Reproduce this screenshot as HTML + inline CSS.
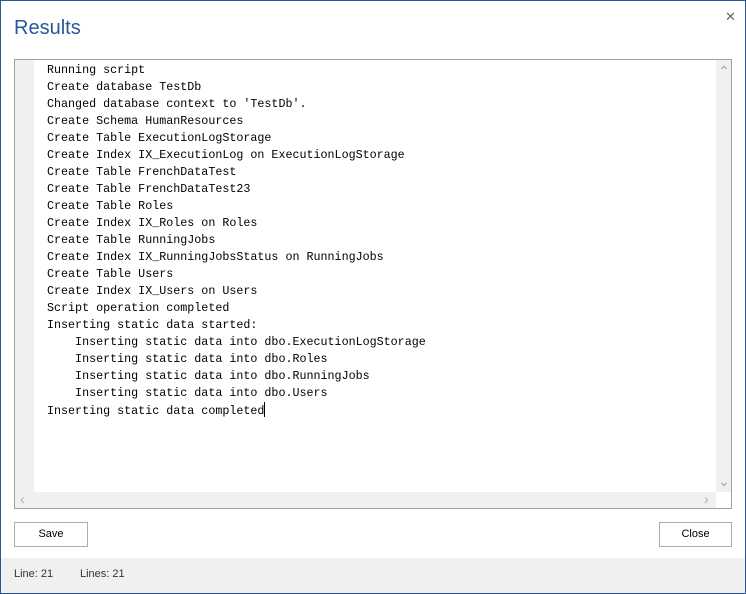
<!DOCTYPE html>
<html><head><style>
body{margin:0;width:746px;height:594px;overflow:hidden;background:#fff;font-family:"Liberation Sans",sans-serif;}
.win{position:absolute;left:0;top:0;width:744px;height:592px;border:1px solid #2b579a;background:#fff;}
.title{position:absolute;left:13px;top:16px;font-size:20px;color:#2b579a;}
.x{position:absolute;left:724px;top:8px;font-size:13px;color:#666;}
.box{position:absolute;left:13px;top:58px;width:716px;height:448px;border:1px solid #a0a0a0;background:#fff;}
.gut{position:absolute;left:0;top:0;width:19px;height:432px;background:#f0f0f0;}
.vs{position:absolute;left:701px;top:0;width:15px;height:432px;background:#f0f0f0;}
.hs{position:absolute;left:0;top:432px;width:701px;height:16px;background:#f0f0f0;}
.ar{position:absolute;color:#a8a8a8;font-size:14px;line-height:14px;}
pre{position:absolute;left:32px;top:2px;margin:0;font-family:"Liberation Mono",monospace;font-size:11.7px;line-height:17px;color:#000;}
.cur{display:inline-block;width:1px;height:15px;background:#000;vertical-align:-3px;}
.btn{position:absolute;top:521px;height:23px;border:1px solid #adadad;background:#fff;font-size:11px;text-align:center;line-height:23px;color:#000;}
.status{position:absolute;left:0;top:557px;width:744px;height:35px;background:#f0f0f0;font-size:11px;color:#333;}
</style></head><body>
<div class="win">
<div class="title">Results</div>
<div class="x">✕</div>
<div class="box">
<div class="gut"></div>
<div class="vs"><span class="ar" style="left:2px;top:4px">&#8963;</span><span class="ar" style="left:2px;top:414px">&#8964;</span></div>
<div class="hs"><span class="ar" style="left:5px;top:0px">&lsaquo;</span><span class="ar" style="left:689px;top:0px">&rsaquo;</span></div>
<pre>Running script
Create database TestDb
Changed database context to 'TestDb'.
Create Schema HumanResources
Create Table ExecutionLogStorage
Create Index IX_ExecutionLog on ExecutionLogStorage
Create Table FrenchDataTest
Create Table FrenchDataTest23
Create Table Roles
Create Index IX_Roles on Roles
Create Table RunningJobs
Create Index IX_RunningJobsStatus on RunningJobs
Create Table Users
Create Index IX_Users on Users
Script operation completed
Inserting static data started:
    Inserting static data into dbo.ExecutionLogStorage
    Inserting static data into dbo.Roles
    Inserting static data into dbo.RunningJobs
    Inserting static data into dbo.Users
Inserting static data completed<span class="cur"></span></pre>
</div>
<div class="btn" style="left:13px;width:72px">Save</div>
<div class="btn" style="left:658px;width:71px">Close</div>
<div class="status"><span style="position:absolute;left:13px;top:10px">Line: 21</span><span style="position:absolute;left:79px;top:10px">Lines: 21</span></div>
</div>
</body></html>
